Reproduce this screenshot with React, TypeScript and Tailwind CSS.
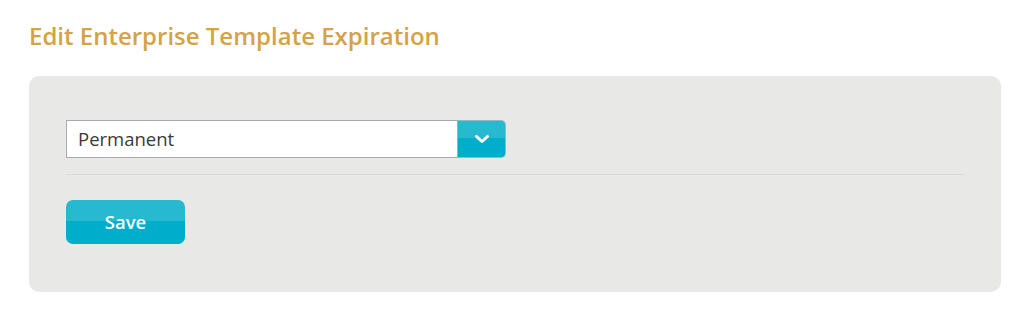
import React from 'react';

export default function App() {
  return (
    <div className="w-[1028px] h-[316px] bg-white pl-[29px] pr-[27px] pt-[19px]" style={{ fontFamily: '"Open Sans", "Liberation Sans", sans-serif' }}>
      <h1 className="text-[24px] leading-[33px] font-semibold text-[#d3a345] tracking-[0px]">Edit Enterprise Template Expiration</h1>
      <div className="mt-[24px] bg-[#e8e8e6] rounded-[10px] px-[37px] pt-[44px] pb-[48px]">
        <div className="flex w-[440px] h-[38px]">
          <div className="flex-1 bg-white border border-[#a9a9a9] flex items-center pl-[11px] text-[18.5px] text-[#3a3a3a]">Permanent</div>
          <div className="w-[48px] rounded-r-[5px] border border-[#8fb9c4] border-l-0 flex items-center justify-center bg-[linear-gradient(to_bottom,#26b9d0_0%,#26b9d0_48%,#00aecb_48%,#00aecb_100%)]">
            <svg width="16" height="11" viewBox="0 0 16 11" fill="none">
              <path d="M2.5 2.5 L8 7.5 L13.5 2.5" stroke="white" strokeWidth="3" strokeLinecap="round" strokeLinejoin="round" />
            </svg>
          </div>
        </div>
        <div className="mt-[16px] h-px bg-[#d8d8d6]" />
        <button className="mt-[25px] w-[119px] h-[44px] rounded-[7px] text-white text-[18.5px] font-semibold bg-[linear-gradient(to_bottom,#26b9d0_0%,#26b9d0_48%,#00aecb_48%,#00aecb_100%)]">Save</button>
      </div>
    </div>
  );
}
